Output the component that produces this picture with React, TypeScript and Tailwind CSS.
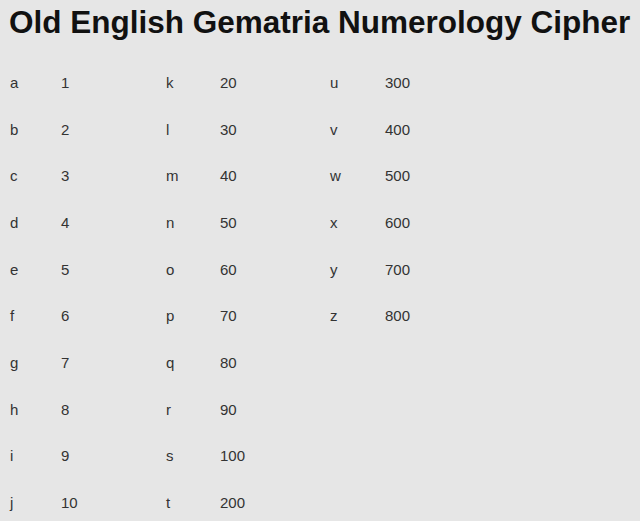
import React from "react";

const cols: [string, number][][] = [
  [["a",1],["b",2],["c",3],["d",4],["e",5],["f",6],["g",7],["h",8],["i",9],["j",10]],
  [["k",20],["l",30],["m",40],["n",50],["o",60],["p",70],["q",80],["r",90],["s",100],["t",200]],
  [["u",300],["v",400],["w",500],["x",600],["y",700],["z",800]],
];

const widths = ["w-[51px]", "w-[105px]", "w-[54px]", "w-[110px]", "w-[55px]", "w-[60px]"];

export default function App() {
  const rows = Array.from({ length: 10 }, (_, i) => i);
  return (
    <div className="w-[640px] h-[521px] overflow-hidden bg-[#e6e6e6] font-['Liberation_Sans',Arial,sans-serif]">
      <h1 className="pl-[9px] pt-[4px] text-[31.5px] leading-[36px] font-bold text-[#111111] whitespace-nowrap">
        Old English Gematria Numerology Cipher
      </h1>
      <div className="pl-[10px] pt-[20px] text-[15px] text-[#333333]">
        {rows.map((r) => (
          <div key={r} className="flex h-[46.67px] items-center">
            {cols.map((c, ci) => (
              <React.Fragment key={ci}>
                <div className={widths[ci * 2]}>{c[r] ? c[r][0] : ""}</div>
                <div className={widths[ci * 2 + 1]}>{c[r] ? c[r][1] : ""}</div>
              </React.Fragment>
            ))}
          </div>
        ))}
      </div>
    </div>
  );
}
